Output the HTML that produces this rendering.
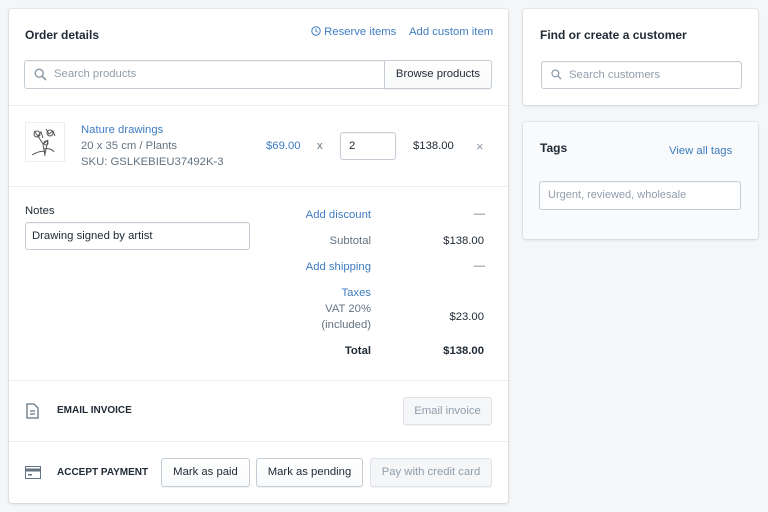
<!DOCTYPE html>
<html><head><meta charset="utf-8"><style>
*{box-sizing:border-box;margin:0;padding:0}
body{width:768px;height:512px;background:#f4f6f8;font-family:"Liberation Sans",sans-serif;font-size:11.3px;color:#212b36;position:relative;overflow:hidden}
.a{position:absolute;white-space:nowrap}
.card{position:absolute;background:#fff;border-radius:3px;box-shadow:0 0 0 1px rgba(63,63,68,.06),0 1px 3px rgba(63,63,68,.15)}
.b{color:#3f7cc0}
.g{color:#637381}
.inp{position:absolute;border:1px solid #c4cdd5;border-radius:3px;background:#fff;box-shadow:inset 0 1px 0 rgba(0,0,0,.03)}
.btn{position:absolute;border:1px solid #c4cdd5;border-radius:3px;background:linear-gradient(#fff,#f9fafb);box-shadow:0 1px 0 rgba(22,29,37,.05);text-align:center;font-size:11.3px;color:#212b36}
.dis{background:#f4f6f8;color:#919eab;border-color:#dfe3e8}
.hr{position:absolute;left:9px;width:499px;height:1px;background:#ebeef0}
h2{font-size:12px;font-weight:bold;position:absolute;white-space:nowrap}
.r{text-align:right}
</style></head><body>
<div class="card" style="left:9px;top:9px;width:499px;height:494px"></div>
<h2 style="left:25px;top:28px">Order details</h2>
<div class="a b" style="left:311px;top:26px"><svg width="10" height="10" viewBox="0 0 10 10" style="vertical-align:-1px"><circle cx="5" cy="5" r="4.2" fill="none" stroke="#3f7cc0" stroke-width="1"/><path d="M5 2.5V5.2L6.7 6.3" fill="none" stroke="#3f7cc0" stroke-width="1"/></svg> Reserve items</div>
<div class="a b" style="left:409px;top:26px">Add custom item</div>
<div class="inp" style="left:24px;top:60px;width:362px;height:29px;border-radius:3px 0 0 3px"></div>
<svg class="a" style="left:34px;top:68px" width="13" height="13" viewBox="0 0 13 13"><circle cx="5.2" cy="5.2" r="4" fill="none" stroke="#919eab" stroke-width="1.5"/><path d="M8.2 8.2L12 12" stroke="#919eab" stroke-width="1.7"/></svg>
<div class="a" style="left:54px;top:68px;color:#919eab">Search products</div>
<div class="btn" style="left:384px;top:60px;width:108px;height:29px;line-height:27px;border-radius:0 3px 3px 0">Browse products</div>
<div class="hr" style="top:105px"></div>
<div class="a" style="left:25px;top:122px;width:40px;height:40px;border:1px solid #eee;background:#fff">
<svg width="38" height="38" viewBox="0 0 38 38"><g fill="none" stroke="#555" stroke-width="1"><path d="M8 8l4 5 3-4 2 6M20 6l3 5 4-3 2 5M12 13l5 8 5-4M17 21l2 12M22 17l-3 14M6 32c5-3 10-5 14-3M18 26c4-1 8 0 10 3"/><circle cx="11" cy="11" r="3"/><circle cx="24" cy="10" r="3"/><circle cx="20" cy="20" r="2"/></g></svg></div>
<div class="a b" style="left:81px;top:124px">Nature drawings</div>
<div class="a g" style="left:81px;top:140px">20 x 35 cm / Plants</div>
<div class="a g" style="left:81px;top:156px">SKU: GSLKEBIEU37492K-3</div>
<div class="a b" style="left:266px;top:140px">$69.00</div>
<div class="a g" style="left:317px;top:140px">x</div>
<div class="inp" style="left:340px;top:132px;width:56px;height:28px"></div>
<div class="a" style="left:349px;top:140px">2</div>
<div class="a" style="left:413px;top:140px">$138.00</div>
<div class="a" style="left:476px;top:139px;color:#919eab;font-size:13px">×</div>
<div class="hr" style="top:186px"></div>
<div class="a" style="left:25px;top:205px">Notes</div>
<div class="inp" style="left:25px;top:222px;width:225px;height:28px"></div>
<div class="a" style="left:32px;top:230px">Drawing signed by artist</div>
<div class="a b r" style="right:397px;top:209px">Add discount</div>
<div class="a r" style="right:283px;top:208px;color:#637381">—</div>
<div class="a g r" style="right:397px;top:235px">Subtotal</div>
<div class="a r" style="right:284px;top:235px">$138.00</div>
<div class="a b r" style="right:397px;top:261px">Add shipping</div>
<div class="a r" style="right:283px;top:260px;color:#637381">—</div>
<div class="a b r" style="right:397px;top:287px">Taxes</div>
<div class="a g r" style="right:397px;top:303px">VAT 20%</div>
<div class="a g r" style="right:397px;top:319px">(included)</div>
<div class="a r" style="right:284px;top:311px">$23.00</div>
<div class="a r" style="right:397px;top:345px;font-weight:bold">Total</div>
<div class="a r" style="right:284px;top:345px;font-weight:bold">$138.00</div>
<div class="hr" style="top:380px"></div>
<svg class="a" style="left:26px;top:403px" width="13" height="16" viewBox="0 0 13 16"><path d="M1 1h7l4 4v10H1z" fill="none" stroke="#637381" stroke-width="1.3"/><path d="M4 8h5M4 11h5" stroke="#637381" stroke-width="1.2"/></svg>
<div class="a" style="left:57px;top:405px;font-size:10px;font-weight:bold">EMAIL INVOICE</div>
<div class="btn dis" style="left:403px;top:397px;width:89px;height:28px;line-height:26px">Email invoice</div>
<div class="hr" style="top:441px"></div>
<svg class="a" style="left:25px;top:466px" width="16" height="13" viewBox="0 0 16 13"><rect x="0.5" y="0.5" width="15" height="12" fill="#fff" stroke="#637381"/><rect x="0.5" y="2.5" width="15" height="3" fill="#637381"/><rect x="3" y="8" width="4" height="1.5" fill="#637381"/></svg>
<div class="a" style="left:57px;top:467px;font-size:10px;font-weight:bold">ACCEPT PAYMENT</div>
<div class="btn" style="left:161px;top:458px;width:89px;height:29px;line-height:27px">Mark as paid</div>
<div class="btn" style="left:256px;top:458px;width:107px;height:29px;line-height:27px">Mark as pending</div>
<div class="btn dis" style="left:370px;top:458px;width:122px;height:29px;line-height:27px">Pay with credit card</div>

<div class="card" style="left:523px;top:9px;width:235px;height:96px"></div>
<h2 style="left:540px;top:28px">Find or create a customer</h2>
<div class="inp" style="left:541px;top:61px;width:201px;height:28px"></div>
<svg class="a" style="left:551px;top:69px" width="11" height="11" viewBox="0 0 13 13"><circle cx="5.2" cy="5.2" r="4" fill="none" stroke="#919eab" stroke-width="1.5"/><path d="M8.2 8.2L12 12" stroke="#919eab" stroke-width="1.7"/></svg>
<div class="a" style="left:569px;top:69px;color:#919eab">Search customers</div>

<div class="card" style="left:523px;top:122px;width:235px;height:117px;background:#f9fafb"></div>
<h2 style="left:540px;top:141px">Tags</h2>
<div class="a b" style="left:669px;top:145px">View all tags</div>
<div class="inp" style="left:539px;top:181px;width:202px;height:29px"></div>
<div class="a" style="left:548px;top:189px;color:#919eab;font-size:11px">Urgent, reviewed, wholesale</div>
</body></html>
